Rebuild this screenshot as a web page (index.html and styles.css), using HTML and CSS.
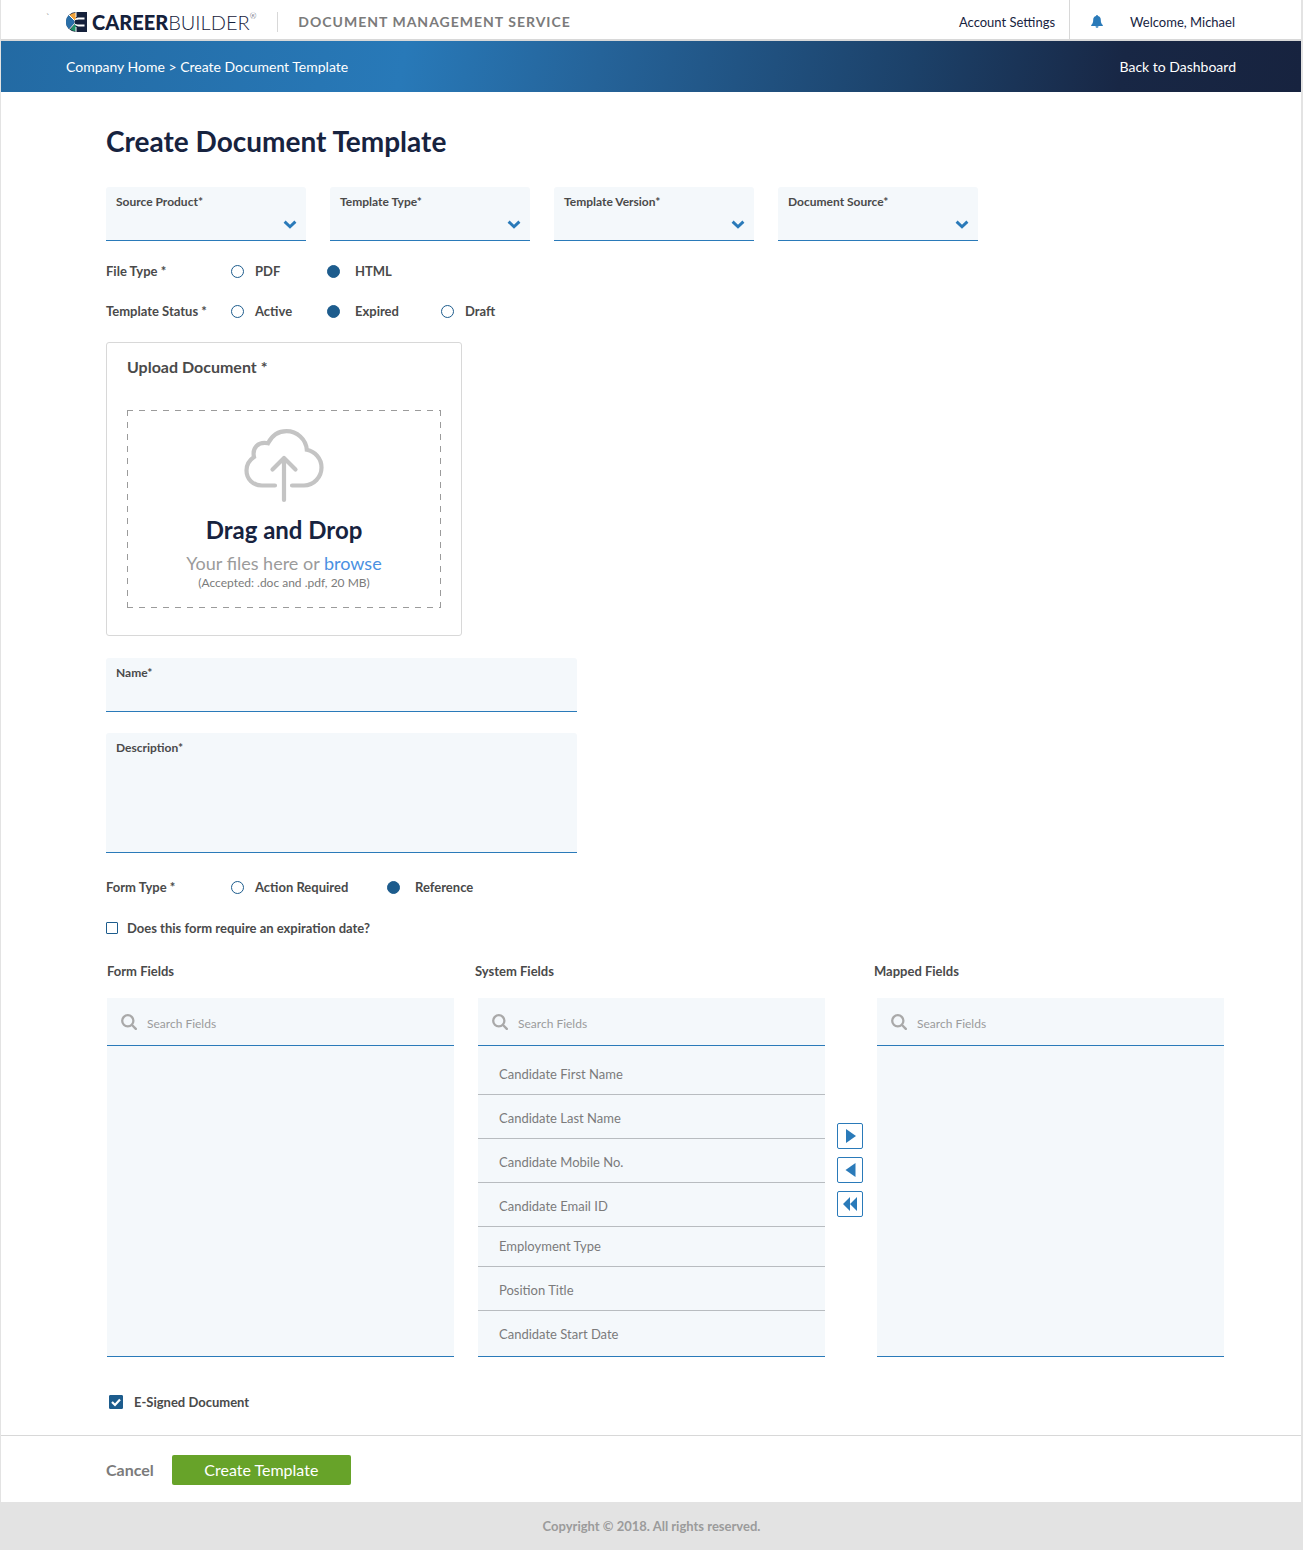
FILE: index.html
```html
<!DOCTYPE html>
<html lang="en">
<head>
<meta charset="utf-8">
<meta name="viewport" content="width=device-width, initial-scale=1">
<title>Create Document Template</title>
<link rel="stylesheet" href="styles.css">
</head>
<body>
<svg class="sprite" aria-hidden="true">
  <symbol id="chevron" viewBox="0 0 12 8"><path d="M1.200 1.400 6 6l4.800-4.600" fill="none" stroke="currentColor" stroke-width="2.600"/></symbol>
  <symbol id="search" viewBox="0 0 16 16"><circle cx="6.800" cy="6.800" r="5.600" fill="none" stroke="currentColor" stroke-width="2.300"/><path d="m11 11 3.800 3.800" stroke="currentColor" stroke-width="2.400" stroke-linecap="round"/></symbol>
</svg>
<div class="page">
  <header class="topbar">
    <div class="brand">
      <span class="tick">`</span>
      <a class="logo" href="#">
        <svg class="logo-mark" viewBox="0 0 21 20" aria-hidden="true">
          <path d="M10 0H21V20H10A10 10 0 0 1 10 0Z" fill="#15213b"/>
          <path d="M10 10 2.800 3A10 10 0 0 0 2.800 17Z" fill="#2a6fa8"/>
          <path d="M10 10V.8A9.500 9.500 0 0 0 3.300 3.300Z" fill="#f2a33c"/>
          <path d="M10 10 4.500 17.500A10 10 0 0 0 10 19.200Z" fill="#1f9067"/>
          <path d="M10 0V5M10 15V20M10 10 2.500 2.500M10 10 3.200 17.500" stroke="#fff" stroke-width="1"/>
          <path d="M18.500 6.500H12.500A3.500 3.500 0 0 0 12.500 13.500H18.500" fill="none" stroke="#fff" stroke-width="1.800"/>
          <circle cx="10.500" cy="10" r="2.200" fill="#15213b"/>
          <path d="M10 9.200H20V10.800H10Z" fill="#15213b"/>
        </svg>
        <span class="wordmark"><b>CAREER</b>BUILDER<sup>®</sup></span>
      </a>
      <span class="service">DOCUMENT MANAGEMENT SERVICE</span>
    </div>
    <nav class="account">
      <a class="account-link" href="#">Account Settings</a>
      <a class="bell" href="#" aria-label="Notifications">
        <svg viewBox="0 0 12 13" aria-hidden="true"><path d="M6 0a1 1 0 0 1 1 1C9 1.500 9.800 3 9.800 5c0 2.600.7 4 2 5v.9H.2V10c1.300-1 2-2.400 2-5C2.200 3 3 1.500 5 1a1 1 0 0 1 1-1ZM4.500 11.300h3a1.500 1.500 0 0 1-3 0Z" fill="currentColor"/></svg>
      </a>
      <a class="welcome" href="#">Welcome, Michael</a>
    </nav>
  </header>
  <nav class="crumbs">
    <span><a href="#">Company Home</a> &gt; <a href="#">Create Document Template</a></span>
    <a href="#">Back to Dashboard</a>
  </nav>

  <form>
    <main class="content">
      <h1>Create Document Template</h1>
      <div class="selects">
        <div class="field"><label for="source">Source Product*</label><select id="source"><option></option></select><svg class="chevron"><use href="#chevron"/></svg></div>
        <div class="field"><label for="type">Template Type*</label><select id="type"><option></option></select><svg class="chevron"><use href="#chevron"/></svg></div>
        <div class="field"><label for="version">Template Version*</label><select id="version"><option></option></select><svg class="chevron"><use href="#chevron"/></svg></div>
        <div class="field"><label for="docsource">Document Source*</label><select id="docsource"><option></option></select><svg class="chevron"><use href="#chevron"/></svg></div>
      </div>

      <div class="choices" role="radiogroup" aria-labelledby="filetype">
        <span id="filetype">File Type *</span>
        <label><input type="radio" name="file"><span>PDF</span></label>
        <label><input type="radio" name="file" checked><span>HTML</span></label>
      </div>
      <div class="choices" role="radiogroup" aria-labelledby="status">
        <span id="status">Template Status *</span>
        <label><input type="radio" name="status"><span>Active</span></label>
        <label><input type="radio" name="status" checked><span>Expired</span></label>
        <label><input type="radio" name="status"><span>Draft</span></label>
      </div>

      <section class="upload">
        <h2>Upload Document *</h2>
        <div class="dropzone">
          <svg class="cloud" viewBox="0 0 80 74" aria-hidden="true">
            <g fill="none" stroke="#c4c4c4" stroke-width="4.200" stroke-linecap="round">
              <path d="M31 56.500H18C9 56.500 2.500 50 2.500 41.500C2.500 35.500 5.500 31 10 28C8 19 14 12.500 24 14.300C28 6.500 35 2.200 42.500 2.200C53 2.200 62 10 62.800 20.800C71 22.500 77.500 29.500 77.500 38.500C77.500 48 70 56.500 60 56.500H48"/>
              <path d="M40 71V29M28.500 40.500 40 29 51.500 40.500" stroke-linejoin="round"/>
            </g>
          </svg>
          <h3>Drag and Drop</h3>
          <p class="drop-hint">Your files here or <a href="#">browse</a></p>
          <p class="drop-note">(Accepted: .doc and .pdf, 20 MB)</p>
        </div>
      </section>

      <div class="field wide"><label for="name">Name*</label><input id="name" type="text"></div>
      <div class="field wide tall"><label for="description">Description*</label><textarea id="description"></textarea></div>

      <div class="choices form-type" role="radiogroup" aria-labelledby="formtype">
        <span id="formtype">Form Type *</span>
        <label><input type="radio" name="form"><span>Action Required</span></label>
        <label><input type="radio" name="form" checked><span>Reference</span></label>
      </div>
      <label class="check"><input type="checkbox"><span>Does this form require an expiration date?</span></label>

      <div class="mapper">
        <section>
          <h2>Form Fields</h2>
          <div class="panel">
            <label class="search"><svg><use href="#search"/></svg><input type="text" placeholder="Search Fields" aria-label="Search form fields"></label>
          </div>
        </section>
        <section>
          <h2 class="outdent">System Fields</h2>
          <div class="panel">
            <label class="search"><svg><use href="#search"/></svg><input type="text" placeholder="Search Fields" aria-label="Search system fields"></label>
            <ul>
              <li>Candidate First Name</li>
              <li>Candidate Last Name</li>
              <li>Candidate Mobile No.</li>
              <li>Candidate Email ID</li>
              <li class="compact">Employment Type</li>
              <li>Position Title</li>
              <li>Candidate Start Date</li>
            </ul>
          </div>
        </section>
        <div class="movers">
          <button type="button" aria-label="Map field"><svg viewBox="0 0 14 14"><path d="M3 0 13 7 3 14Z"/></svg></button>
          <button type="button" aria-label="Unmap field"><svg viewBox="0 0 14 14"><path d="M12.500 0 2.500 7 12.500 14Z"/></svg></button>
          <button type="button" aria-label="Unmap all fields"><svg viewBox="0 0 14 14"><path d="M7 0 0 7 7 14ZM14 0 7 7 14 14Z"/></svg></button>
        </div>
        <section>
          <h2 class="outdent">Mapped Fields</h2>
          <div class="panel">
            <label class="search"><svg><use href="#search"/></svg><input type="text" placeholder="Search Fields" aria-label="Search mapped fields"></label>
          </div>
        </section>
      </div>

      <label class="check signed"><input type="checkbox" checked><span>E-Signed Document</span></label>
    </main>
    <div class="actions">
      <button class="cancel" type="button">Cancel</button>
      <button class="submit" type="submit">Create Template</button>
    </div>
  </form>
</div>
<footer>Copyright © 2018. All rights reserved.</footer>
</body>
</html>
```
FILE: styles.css
```css
* { box-sizing: border-box; margin: 0; padding: 0; }

:root {
  --navy: #17233f;
  --blue: #2a7ab9;
  --deep: #1d5c8d;
  --text: #4a4a4a;
  --muted: #7b7b7b;
  --tint: #f4f8fb;
  --line: #d8d8d8;
}

body {
  font: 13px/20px Lato, "Open Sans", sans-serif;
  color: var(--text);
  background: #fff;
}

a { color: inherit; text-decoration: none; }
button, input, select, textarea { font: inherit; color: inherit; border: 0; background: none; }
h1, h2, h3 { font-weight: bold; }
.sprite { display: none; }

.page { border-left: 1px solid #e3e3e3; border-right: 2px solid #e3e3e3; }

/* Header */
.topbar {
  display: flex;
  align-items: center;
  height: 41px;
  padding: 0 66px 0 45px;
  border-bottom: 2px solid var(--line);
}
.brand { display: flex; align-items: center; padding-top: 4px; }
.tick { align-self: flex-start; width: 20px; font-size: 10px; line-height: 10px; color: #999; }
.logo { display: flex; align-items: center; gap: 5px; color: #15213b; }
.logo-mark { width: 21px; height: 20px; }
.wordmark { font-size: 20px; font-weight: 300; white-space: nowrap; }
.wordmark b { font-weight: 900; }
.wordmark sup { font-size: 8px; line-height: 8px; vertical-align: top; }
.service {
  margin-left: 21px;
  padding-left: 20px;
  border-left: 1px solid var(--line);
  font-size: 14px;
  font-weight: bold;
  letter-spacing: 1px;
  color: var(--muted);
}
.account { display: flex; align-items: center; align-self: stretch; margin-left: auto; color: var(--navy); padding-top: 4px; }
.account-link { padding-right: 14px; }
.bell { display: flex; align-items: center; height: 39px; margin-top: -4px; padding: 4px 27px 0 21px; border-left: 1px solid var(--line); color: var(--blue); }
.bell svg { width: 12px; height: 13px; }

.crumbs {
  display: flex;
  align-items: center;
  justify-content: space-between;
  height: 51px;
  padding: 0 65px;
  font-size: 14px;
  color: #fff;
  background: linear-gradient(100deg, #236aa3, #2879b8 31%, #256399 46%, #1c4169 70%, #182745 86%, #17233f);
}

/* Form */
.content { padding: 32px 77px 23px 105px; }
h1 { font-size: 28px; line-height: 34px; color: var(--navy); }
.selects { display: grid; grid-template-columns: repeat(4, 200px); gap: 24px; margin: 29px 0 20px; }
.field {
  display: grid;
  height: 54px;
  padding-top: 5px;
  grid-template-rows: 20px 1fr;
  border-bottom: 1px solid var(--blue);
  border-radius: 3px 3px 0 0;
  background: var(--tint);
}
.field label { padding-left: 10px; font-size: 12px; font-weight: bold; }
.field select { grid-area: 2 / 1; width: 100%; padding: 0 10px; appearance: none; }
.field input, .field textarea { width: 100%; padding: 0 10px; resize: none; }
.chevron { grid-area: 2 / 1; width: 14px; height: 9px; margin: 8px 9px 0; justify-self: end; color: var(--blue); pointer-events: none; }
.wide { max-width: 471px; margin-bottom: 21px; }
.tall { height: 120px; margin-bottom: 24px; }

.choices {
  display: grid;
  grid-template-columns: 125px 96px 114px auto;
  justify-content: start;
  margin-bottom: 20px;
  font-weight: bold;
}
.form-type { grid-template-columns: 125px 156px auto; margin-bottom: 21px; }
.choices label { display: flex; align-items: center; gap: 11px; white-space: nowrap; }
.choices input {
  width: 13px;
  height: 13px;
  appearance: none;
  border: 1px solid var(--deep);
  border-radius: 50%;
  background: #fff;
}
.choices input:checked { background: var(--deep); }
.choices input:checked + span { padding-left: 4px; }

.upload { max-width: 356px; height: 294px; margin: 21px 0 22px; padding: 14px 20px; border: 1px solid var(--line); border-radius: 3px; }
.upload h2 { font-size: 16px; line-height: 20px; margin-bottom: 33px; }
.dropzone {
  --h: repeating-linear-gradient(90deg, #9b9b9b 0 6px, transparent 6px 12px);
  --v: repeating-linear-gradient(#9b9b9b 0 6px, transparent 6px 12px);
  height: 198px;
  padding-top: 19px;
  text-align: center;
  background: var(--h) top / 100% 1px no-repeat, var(--h) bottom / 100% 1px no-repeat,
    var(--v) left / 1px 100% no-repeat, var(--v) right / 1px 100% no-repeat;
}
.cloud { display: block; width: 80px; height: 74px; margin: 0 auto 12px; }
.dropzone h3 { font-size: 24px; line-height: 30px; color: var(--navy); }
.drop-hint { margin-top: 7px; font-size: 18px; line-height: 22px; color: #9b9b9b; }
.drop-hint a { color: #4a90e2; }
.drop-note { font-size: 12px; line-height: 18px; color: var(--muted); }

.check { display: flex; align-items: center; gap: 9px; font-weight: bold; }
.check input { width: 12px; height: 12px; appearance: none; border: 1px solid var(--deep); border-radius: 1px; }
.signed { gap: 11px; padding-left: 3px; }
.signed input { width: 14px; height: 14px; }
.check input:checked {
  background: var(--deep) url("data:image/svg+xml,%3Csvg xmlns='http://www.w3.org/2000/svg' viewBox='0 0 12 12'%3E%3Cpath d='M2 6l3 3 5-5.500' fill='none' stroke='white' stroke-width='2.200'/%3E%3C/svg%3E") center / 12px no-repeat;
}

/* Field mapping */
.mapper { display: grid; grid-template-columns: 1fr 24px 1fr 52px 1fr; margin: 23px 0 35px; padding-left: 1px; }
.mapper section:nth-of-type(2) { grid-column: 3; }
.mapper section:nth-of-type(3) { grid-column: 5; }
.mapper h2 { margin-bottom: 17px; font-size: 13px; line-height: 20px; }
.mapper .outdent { margin-left: -3px; }
.panel { height: 359px; border-bottom: 1px solid var(--blue); background: var(--tint); }
.search { display: flex; align-items: center; gap: 10px; height: 48px; padding: 1px 14px 0; border-bottom: 1px solid var(--blue); }
.search svg { width: 16px; height: 16px; color: #a9a9a9; }
.search input { flex: 1; min-width: 0; padding-top: 3px; font-size: 12px; }
.search input::placeholder { color: #9b9b9b; opacity: 1; }
.panel ul { padding-top: 5px; list-style: none; }
.panel li { height: 44px; padding: 13px 21px 0; border-bottom: 1px solid #b8bcc0; color: var(--muted); }
.panel li.compact { height: 40px; padding-top: 9px; }
.panel li:last-child { border-bottom: 0; }
.movers { grid-column: 4; display: flex; flex-direction: column; gap: 8px; padding: 162px 0 0 12px; }
.movers button { display: flex; align-items: center; justify-content: center; width: 26px; height: 26px; border: 1px solid var(--blue); border-radius: 2px; }
.movers svg { width: 14px; height: 14px; fill: var(--blue); }

.actions { display: flex; align-items: center; gap: 18px; height: 67px; padding: 2px 105px 0; border-top: 1px solid var(--line); font-size: 16px; }
.cancel { font-weight: bold; color: var(--muted); }
.submit { width: 179px; height: 30px; border-radius: 2px; color: #fff; background: #67a329; }

footer { height: 48px; padding-top: 14px; text-align: center; font-weight: bold; color: #9b9b9b; background: #e3e3e3; }
```
